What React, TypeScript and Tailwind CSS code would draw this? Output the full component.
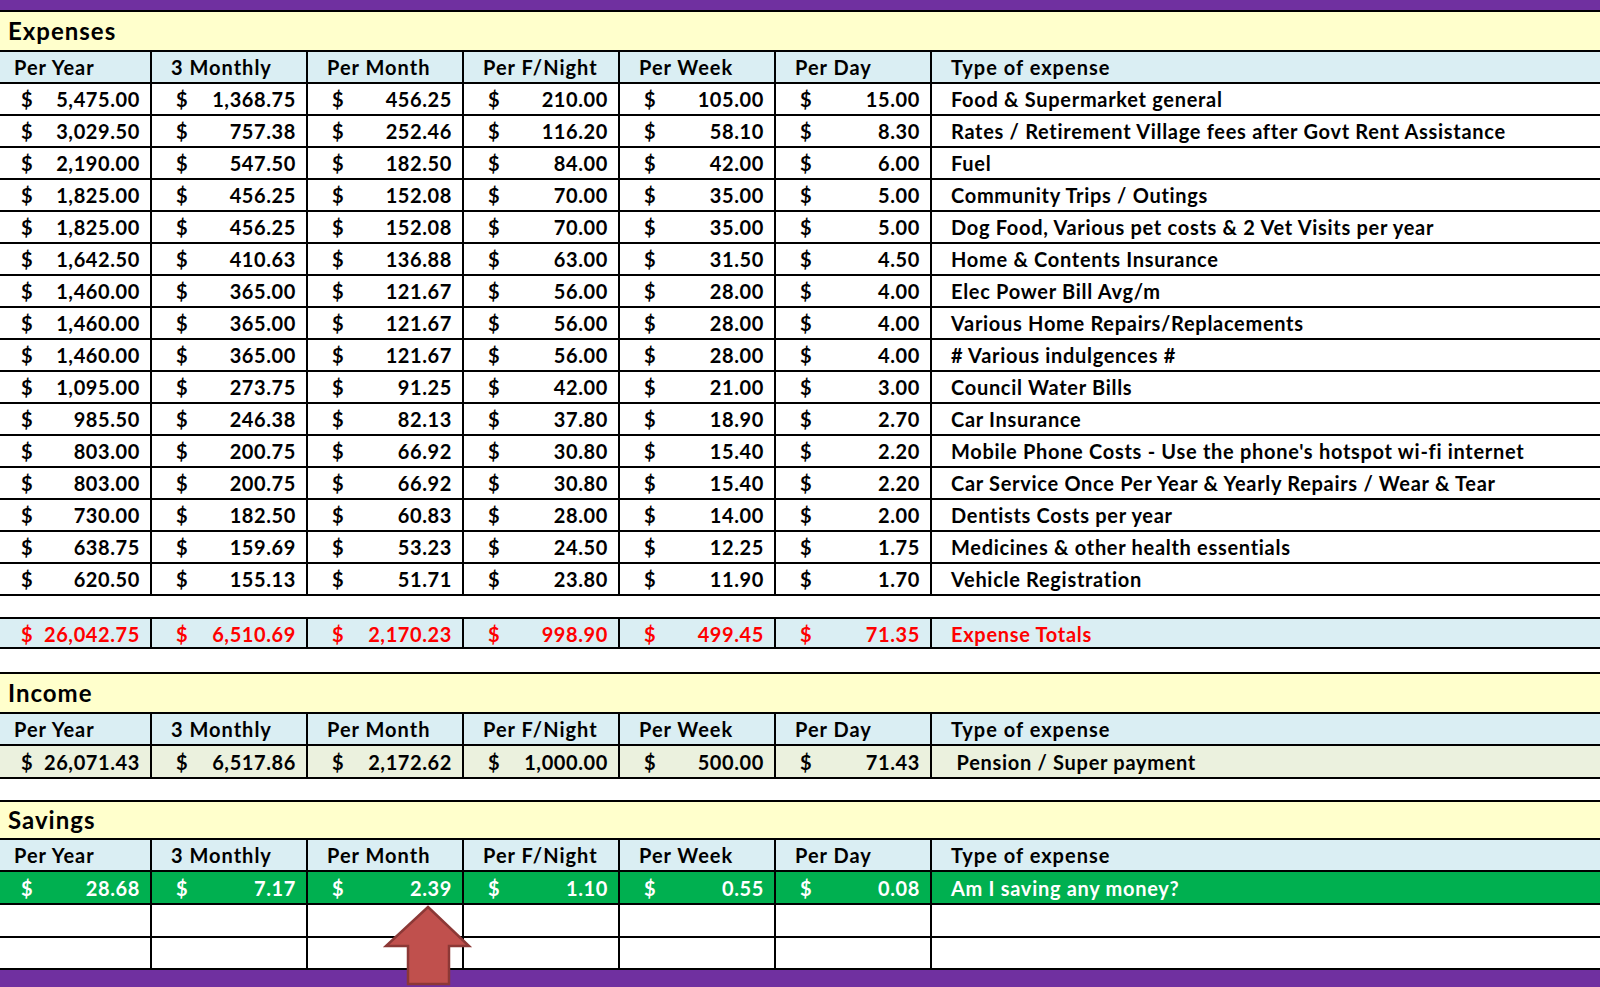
import React from 'react'

const cols = 'grid grid-cols-[152px_156px_156px_156px_156px_156px_1fr]'
const font = { fontFamily: 'Lato, "Open Sans", sans-serif' }

const heads = ['Per Year', '3 Monthly', 'Per Month', 'Per F/Night', 'Per Week', 'Per Day', 'Type of expense']

const expenses: string[][] = [
  ['5,475.00', '1,368.75', '456.25', '210.00', '105.00', '15.00', 'Food & Supermarket general'],
  ['3,029.50', '757.38', '252.46', '116.20', '58.10', '8.30', 'Rates / Retirement Village fees after Govt Rent Assistance'],
  ['2,190.00', '547.50', '182.50', '84.00', '42.00', '6.00', 'Fuel'],
  ['1,825.00', '456.25', '152.08', '70.00', '35.00', '5.00', 'Community Trips / Outings'],
  ['1,825.00', '456.25', '152.08', '70.00', '35.00', '5.00', 'Dog Food, Various pet costs & 2 Vet Visits per year'],
  ['1,642.50', '410.63', '136.88', '63.00', '31.50', '4.50', 'Home & Contents Insurance'],
  ['1,460.00', '365.00', '121.67', '56.00', '28.00', '4.00', 'Elec Power Bill Avg/m'],
  ['1,460.00', '365.00', '121.67', '56.00', '28.00', '4.00', 'Various Home Repairs/Replacements'],
  ['1,460.00', '365.00', '121.67', '56.00', '28.00', '4.00', '# Various indulgences #'],
  ['1,095.00', '273.75', '91.25', '42.00', '21.00', '3.00', 'Council Water Bills'],
  ['985.50', '246.38', '82.13', '37.80', '18.90', '2.70', 'Car Insurance'],
  ['803.00', '200.75', '66.92', '30.80', '15.40', '2.20', "Mobile Phone Costs - Use the phone's hotspot wi-fi internet"],
  ['803.00', '200.75', '66.92', '30.80', '15.40', '2.20', 'Car Service Once Per Year & Yearly Repairs / Wear & Tear'],
  ['730.00', '182.50', '60.83', '28.00', '14.00', '2.00', 'Dentists Costs per year'],
  ['638.75', '159.69', '53.23', '24.50', '12.25', '1.75', 'Medicines & other health essentials'],
  ['620.50', '155.13', '51.71', '23.80', '11.90', '1.70', 'Vehicle Registration'],
]

function Title({ text, h }: { text: string; h: string }) {
  return (
    <div className={`${h} flex items-center border-y-2 border-black bg-[#ffffcc] pl-[8px] text-[24px] font-bold tracking-[1px] text-black`}>
      {text}
    </div>
  )
}

function HeadRow() {
  return (
    <div className={`${cols} h-[32px] border-b-2 border-black bg-[#daeef3] text-[20px] font-bold tracking-[1px] text-black`}>
      {heads.map((t, i) => (
        <div key={t} className={`flex items-center ${i === 0 ? 'pl-[14px]' : 'pl-[19px]'} ${i < 6 ? 'border-r-2 border-black' : ''}`}>
          {t}
        </div>
      ))}
    </div>
  )
}

function Row({ r, h = 'h-[32px]', bg = 'bg-white', text = 'text-black', extra = '' }:
  { r: string[]; h?: string; bg?: string; text?: string; extra?: string }) {
  return (
    <div className={`${cols} ${h} ${bg} ${text} ${extra} border-b-2 border-black text-[20px] font-bold`}>
      {r.slice(0, 6).map((v, i) => (
        <div key={i} className={`flex items-center justify-between border-r-2 border-black pr-[10px] ${i === 0 ? 'pl-[21px]' : 'pl-[24px]'}`}>
          <span>$</span>
          <span className="tracking-[0.6px]">{v}</span>
        </div>
      ))}
      <div className="flex items-center whitespace-nowrap pl-[19px] tracking-[0.7px]">{r[6]}</div>
    </div>
  )
}

function Blank({ h }: { h: string }) {
  return (
    <div className={`${cols} ${h} border-b-2 border-black bg-white`}>
      {[0, 1, 2, 3, 4, 5].map(i => <div key={i} className="border-r-2 border-black" />)}
      <div />
    </div>
  )
}

export default function App() {
  return (
    <div className="relative flex h-[987px] w-[1600px] flex-col overflow-hidden bg-white" style={font}>
      <div className="h-[10px] shrink-0 bg-[#7030a0]" />

      <Title text="Expenses" h="h-[42px] shrink-0" />
      <HeadRow />
      {expenses.map((r, i) => <Row key={i} r={r} />)}

      <div className="h-[21px] shrink-0" />
      <Row r={['26,042.75', '6,510.69', '2,170.23', '998.90', '499.45', '71.35', 'Expense Totals']}
        bg="bg-[#daeef3]" text="text-[#ff0000]" extra="border-t-2" />

      <div className="h-[23px] shrink-0" />
      <Title text="Income" h="h-[42px] shrink-0" />
      <HeadRow />
      <Row r={['26,071.43', '6,517.86', '2,172.62', '1,000.00', '500.00', '71.43', '\u00a0Pension / Super payment']}
        h="h-[33px]" bg="bg-[#ebf1de]" />

      <div className="h-[21px] shrink-0" />
      <Title text="Savings" h="h-[40px] shrink-0" />
      <HeadRow />
      <Row r={['28.68', '7.17', '2.39', '1.10', '0.55', '0.08', 'Am I saving any money?']}
        h="h-[33px]" bg="bg-[#00b050]" text="text-white" />
      <Blank h="h-[33px]" />
      <Blank h="h-[32px]" />

      <div className="flex-1 bg-[#7030a0]" />

      {/* pointer arrow under the monthly saving */}
      <svg className="absolute left-[380px] top-[900px]" width="100" height="87" viewBox="380 900 100 87">
        <polygon points="428,907 469,946 449,946 449,984 408,984 408,946 386,946"
          fill="#c0504d" stroke="#8c3836" strokeWidth="2.5" strokeLinejoin="miter" />
      </svg>
    </div>
  )
}
